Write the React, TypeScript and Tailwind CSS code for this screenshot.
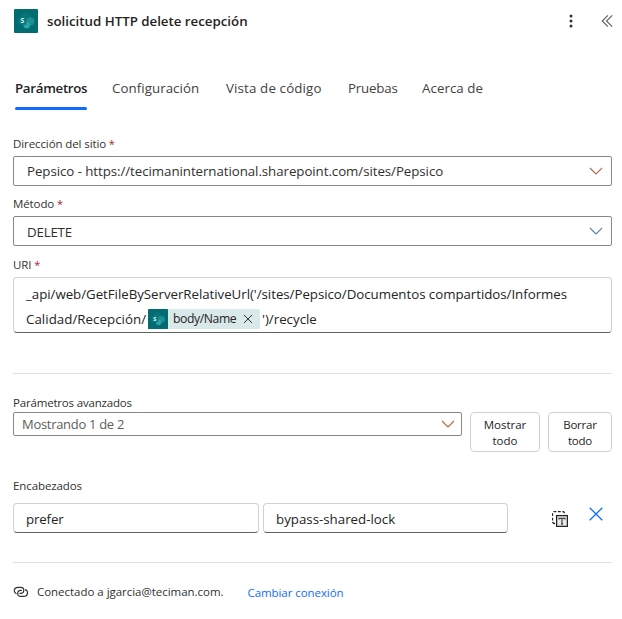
import React from 'react';

function SharePointIcon({ size }: { size: number }) {
  return (
    <svg width={size} height={size} viewBox="0 0 24 24" className="block shrink-0">
      <rect width="24" height="24" rx="1" fill="#036c70" />
      <circle cx="11.8" cy="8.6" r="4.7" fill="#077579" />
      <circle cx="16.2" cy="12.4" r="4.1" fill="#1b8f94" />
      <circle cx="12.7" cy="16.2" r="3.2" fill="#2ba3aa" />
      <rect x="4.4" y="8" width="7.8" height="7.8" rx=".8" fill="#05787c" />
      <text x="8.3" y="14.4" textAnchor="middle" fontSize="6.8" fontWeight="700" fill="#e8f5f5" fontFamily="Open Sans, sans-serif">S</text>
    </svg>
  );
}

function Chevron({ left, right }: { left: string; right: string }) {
  return (
    <svg width="14" height="8" viewBox="0 0 14 8" fill="none" strokeWidth="1.1" className="block shrink-0">
      <path d="M1 1l6 6" stroke={left} />
      <path d="M7 7l6-6" stroke={right} />
    </svg>
  );
}

function Label({ text, required }: { text: string; required?: boolean }) {
  return (
    <div className="h-4 text-[11.5px] leading-4 tracking-[-0.1px] whitespace-nowrap text-[#323130]">
      {text}
      {required && <span className="text-[11px] text-[#a4262c]"> *</span>}
    </div>
  );
}

function Select({ value, left, right, spacing }: { value: string; left: string; right: string; spacing: string }) {
  return (
    <div className="flex h-[30px] items-center justify-between rounded-[2px] border border-[#8a8886] pr-[8px] pl-[13px]">
      <span className={`text-[13.3px] leading-5 whitespace-nowrap text-[#323130] ${spacing}`}>{value}</span>
      <Chevron left={left} right={right} />
    </div>
  );
}

const inputBox = 'rounded-[4px] border border-[#d1d1d1] border-b-[#616161] text-[13.3px] text-[#242424]';

export default function App() {
  return (
    <div className="h-[619px] w-[622px] overflow-hidden bg-white pr-[10px] pl-[13px] font-['Open_Sans','Noto_Sans',sans-serif] text-[#323130]">
      <header className="flex h-[42px] items-center pl-px">
        <SharePointIcon size={24} />
        <h1 className="ml-[9px] pt-[2px] text-[13.3px] font-semibold tracking-[-0.01px] whitespace-nowrap text-[#242424]">solicitud HTTP delete recepción</h1>
        <svg width="4" height="14" viewBox="0 0 4 14" fill="#323130" className="ml-auto">
          <circle cx="2" cy="2" r="1.5" />
          <circle cx="2" cy="7" r="1.5" />
          <circle cx="2" cy="12" r="1.5" />
        </svg>
        <svg width="12" height="14" viewBox="0 0 12 14" fill="none" stroke="#605e5c" strokeWidth="1.1" className="mr-[-1px] ml-[28px]">
          <path d="M6.9 1.3l-5.7 5.7 5.7 5.7M11.2 1.3l-5.7 5.7 5.7 5.7" />
        </svg>
      </header>

      <nav className="mt-[34px] flex h-[34px] text-[13.3px] leading-6 whitespace-nowrap text-[#424242]">
        <div className="ml-[2px] w-[72px] font-semibold text-[#242424]">
          <span className="tracking-[-0.3px]">Parámetros</span>
          <div className="mt-[7px] h-[3px] rounded-full bg-[#0f6cff]" />
        </div>
        <span className="ml-[25px] w-[114px] tracking-[0.06px]">Configuración</span>
        <span className="w-[122px] tracking-[0.15px]">Vista de código</span>
        <span className="w-[74px] tracking-[-0.2px]">Pruebas</span>
        <span className="tracking-[0.06px]">Acerca de</span>
      </nav>

      <section className="pt-[26px]">
        <Label text="Dirección del sitio" required />
        <div className="mt-[4px]"><Select value="Pepsico - https://tecimaninternational.sharepoint.com/sites/Pepsico" left="#a86e4c" right="#b87855" spacing="tracking-[-0.06px]" /></div>
        <div className="mt-[10px]"><Label text="Método" required /></div>
        <div className="mt-[4px]"><Select value="DELETE" left="#4e83a8" right="#6688a0" spacing="pt-px tracking-[-0.2px]" /></div>
        <div className="mt-[11px]"><Label text="URI" required /></div>
        <div className={`mt-[4px] h-[56px] pt-[4px] pl-[12px] leading-[25px] whitespace-nowrap ${inputBox}`}>
          <div className="tracking-[-0.04px]">_api/web/GetFileByServerRelativeUrl('/sites/Pepsico/Documentos compartidos/Informes</div>
          <div className="flex h-[25px] items-center">
            <span className="w-[120px] tracking-[0.04px]">Calidad/Recepción/</span>
            <span className="mt-[-2px] ml-[2px] flex h-[20px] w-[112px] items-center rounded-[2px] bg-[#d9e8e8]">
              <SharePointIcon size={20} />
              <span className="ml-[5px] pt-px text-[12.2px] leading-5 tracking-[-0.4px]">body/Name</span>
              <svg width="8" height="8" viewBox="0 0 8 8" stroke="#323130" strokeWidth="1" className="mr-[8px] ml-auto"><path d="M0 0l8 8M8 0l-8 8" /></svg>
            </span>
            <span className="ml-[2px]">')/recycle</span>
          </div>
        </div>
      </section>

      <section className="mt-[40px] border-t border-[#e1dfdd] pt-[21px]">
        <div className="tracking-normal [&>div]:tracking-[-0.18px]"><Label text="Parámetros avanzados" /></div>
        <div className="mt-px flex gap-2">
          <div className="flex h-[24px] w-[449px] items-center justify-between rounded-[2px] border border-[#8a8886] pr-[6px] pl-[8px]">
            <span className="text-[13px] leading-5 tracking-[-0.3px] text-[#605e5c]">Mostrando 1 de 2</span>
            <Chevron left="#a86e4c" right="#a86e4c" />
          </div>
          <button className="h-[40px] w-[70px] rounded-[4px] border border-[#d1d1d1] pt-[2px] text-[11.5px] leading-4 text-[#242424]">Mostrar<br />todo</button>
          <button className="h-[40px] w-[64px] rounded-[4px] border border-[#d1d1d1] pt-[2px] text-[11.5px] leading-4 tracking-[-0.2px] text-[#242424]">Borrar<br />todo</button>
        </div>
      </section>

      <section className="pt-[26px]">
        <Label text="Encabezados" />
        <div className="mt-[9px] flex">
          <div className={`flex h-[30px] w-[246px] items-center pt-[4px] pl-[12px] tracking-[-0.15px] ${inputBox}`}>prefer</div>
          <div className={`ml-[4px] flex h-[30px] w-[245px] items-center pt-[4px] pl-[12px] ${inputBox}`}>bypass-shared-lock</div>
          <svg width="16" height="16" viewBox="0 0 16 16" fill="none" className="mt-[8px] ml-[44px]">
            <path d="M3 12.5h-.5a2 2 0 0 1-2-2v-8a2 2 0 0 1 2-2h8a2 2 0 0 1 2 2V3" stroke="#242424" strokeWidth="1.3" strokeDasharray="2.8 1.6" />
            <rect x="4.6" y="4.6" width="10.8" height="10.8" fill="#e8e8e8" stroke="#242424" strokeWidth="1.3" />
            <path d="M7 8.5V7.3h6v1.2M10 7.5v6M9 13.2h2" stroke="#424242" strokeWidth="1.2" />
          </svg>
          <svg width="14" height="14" viewBox="0 0 14 14" fill="none" stroke="#0f6cff" strokeWidth="1.3" className="mt-[4px] ml-[21px]"><path d="M.7.7l12.6 12.6M13.3.7L.7 13.3" /></svg>
        </div>
      </section>

      <footer className="mt-[29px] flex h-[58px] items-center border-t border-[#e1dfdd] text-[11.5px] leading-4 whitespace-nowrap">
        <svg width="16" height="12" viewBox="0 0 16 12" fill="none" stroke="#323130" strokeWidth="1.15" strokeLinecap="round">
          <path d="M3.1 7.6C2 7 1.3 6 1.3 4.8 1.3 2.7 3 1.3 5.1 1.3h2.5c1.9 0 3.2 1.2 3.2 2.9S9.500 7.300 7.800 7.300H6.900" />
          <path d="M12.400 3.600c1.300.5 2.100 1.500 2.100 2.800 0 2.300-1.700 4-4.100 4H7.900c-1.900 0-3.200-1.200-3.200-2.900s1.300-3.100 3-3.100h.7" />
        </svg>
        <span className="ml-[8px] w-[210.5px] tracking-[-0.03px]">Conectado a jgarcia@teciman.com.</span>
        <span className="pt-[2px] tracking-[-0.07px] text-[#0f6cff]">Cambiar conexión</span>
      </footer>
    </div>
  );
}
